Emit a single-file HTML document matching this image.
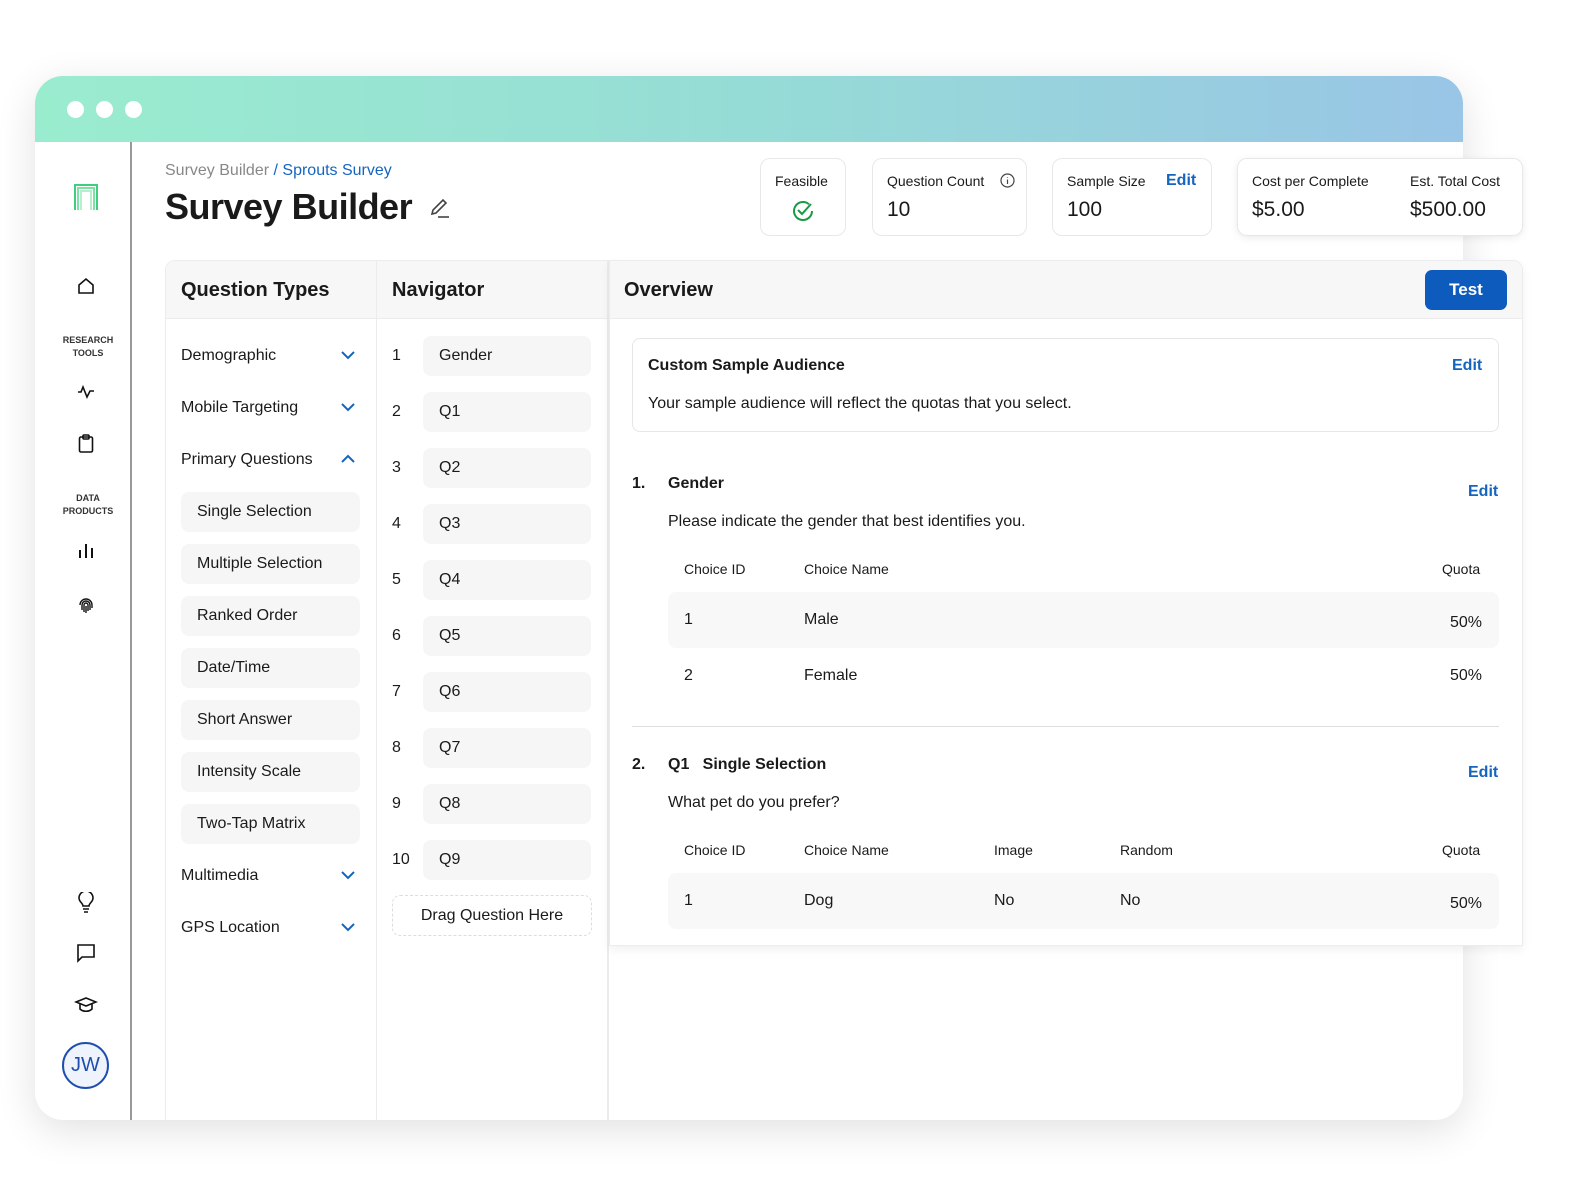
<!DOCTYPE html>
<html><head><meta charset="utf-8"><style>
*{margin:0;padding:0;box-sizing:border-box}
body{width:1571px;height:1197px;background:#fff;font-family:"Liberation Sans",sans-serif;color:#1a1a1a;position:relative;overflow:hidden}
.a{position:absolute;white-space:nowrap}
.win{position:absolute;left:35px;top:76px;width:1428px;height:1044px;border-radius:28px;background:#fff;box-shadow:0 10px 40px rgba(0,0,0,.12);overflow:hidden}
.hdr{position:absolute;left:0;top:0;width:100%;height:66px;background:linear-gradient(90deg,#9aeccf 0%,#96dcd6 50%,#99c5e6 100%)}
.dot{position:absolute;top:25px;width:17px;height:17px;border-radius:50%;background:#fff}
.t16{font-size:16px;line-height:18px}
.blue{color:#1565c0}
.card{position:absolute;top:158px;height:78px;border:1px solid #e8e8e8;border-radius:10px;background:#fff}
.pill{position:absolute;height:40px;background:#f6f6f6;border-radius:8px;font-size:16px;line-height:40px;padding-left:16px}
.lbl{font-size:14px;line-height:16px}
.side{font-size:9px;line-height:13px;text-align:center;color:#333;font-weight:bold;width:60px}
</style></head><body>
<div class="win">
<div class="hdr"></div>
<div class="dot" style="left:32px"></div><div class="dot" style="left:61px"></div><div class="dot" style="left:90px"></div>
<div style="position:absolute;left:95px;top:66px;width:2px;height:978px;background:#999"></div>
</div>
<!-- sidebar icons -->
<svg class="a" style="left:74px;top:184px" width="24" height="26" viewBox="0 0 24 26" fill="none" stroke="#3ecf7e" stroke-width="2"><path d="M1 26V1h22v25"/><path d="M4 26V4h16v22" stroke="#7fe0a8"/><path d="M7 26V7h10v19" stroke="#b5efcd"/></svg>
<svg class="a" style="left:77px;top:277px" width="18" height="18" viewBox="0 0 18 18" fill="none" stroke="#111" stroke-width="1.6"><path d="M2 8L9 2l7 6v8H2z"/></svg>
<div class="a side" style="left:58px;top:334px">RESEARCH<br>TOOLS</div>
<svg class="a" style="left:77px;top:385px" width="18" height="14" viewBox="0 0 18 14" fill="none" stroke="#111" stroke-width="1.6"><path d="M1 7h3l2-5 4 10 3-6h4"/></svg>
<svg class="a" style="left:78px;top:434px" width="16" height="19" viewBox="0 0 16 19" fill="none" stroke="#111" stroke-width="1.6"><rect x="1.5" y="3" width="13" height="15" rx="1.5"/><rect x="5" y="1" width="6" height="4" rx="1"/></svg>
<div class="a side" style="left:58px;top:492px">DATA<br>PRODUCTS</div>
<svg class="a" style="left:78px;top:542px" width="16" height="17" viewBox="0 0 16 17" fill="#111"><rect x="1" y="8" width="2" height="8"/><rect x="7" y="2" width="2" height="14"/><rect x="13" y="6" width="2" height="10"/></svg>
<svg class="a" style="left:77px;top:597px" width="18" height="18" viewBox="0 0 18 18" fill="none" stroke="#111" stroke-width="1.4"><path d="M3 8a6 6 0 0112 0v3M5 13V8a4 4 0 018 0v5M7 15V8a2 2 0 014 0v6M9 9v7"/></svg>
<svg class="a" style="left:78px;top:892px" width="16" height="22" viewBox="0 0 16 22" fill="none" stroke="#111" stroke-width="1.6"><path d="M5 14c0-3-4-4-4-8a7 7 0 0114 0c0 4-4 5-4 8z"/><path d="M5 17h6M6 20h4"/></svg>
<svg class="a" style="left:76px;top:943px" width="20" height="20" viewBox="0 0 20 20" fill="none" stroke="#111" stroke-width="1.6"><path d="M2 2h16v12H6l-4 4z"/></svg>
<svg class="a" style="left:74px;top:996px" width="24" height="18" viewBox="0 0 24 18" fill="none" stroke="#111" stroke-width="1.6"><path d="M2 6l10-4 10 4-10 4z"/><path d="M6 8v5c3 3 9 3 12 0V8"/></svg>
<div class="a" style="left:62px;top:1042px;width:47px;height:47px;border:2px solid #1e4fb0;border-radius:50%;background:#eef3fc;color:#1e4fb0;font-size:20px;line-height:43px;text-align:center">JW</div>

<!-- header -->
<div class="a t16" style="left:165px;top:162px;color:#888">Survey Builder <span class="blue">/ Sprouts Survey</span></div>
<div class="a" style="left:165px;top:186px;font-size:36px;line-height:42px;font-weight:bold;letter-spacing:-0.5px">Survey Builder</div>
<svg class="a" style="left:429px;top:197px" width="22" height="22" viewBox="0 0 22 22" fill="none" stroke="#444" stroke-width="1.6"><path d="M3 17l1-4L14 3l3 3L7 16z"/><path d="M9 20h11"/></svg>

<div class="card" style="left:760px;width:86px"></div>
<div class="a lbl" style="left:775px;top:173px">Feasible</div>
<svg class="a" style="left:791px;top:199px" width="24" height="24" viewBox="0 0 24 24" fill="none" stroke="#1a9a45" stroke-width="2"><path d="M21 12a9 9 0 11-3-6.7"/><path d="M7 11l4 4 9-10"/></svg>
<div class="card" style="left:872px;width:155px"></div>
<div class="a lbl" style="left:887px;top:173px">Question Count</div>
<svg class="a" style="left:1000px;top:173px" width="15" height="15" viewBox="0 0 15 15" fill="none" stroke="#444" stroke-width="1.2"><circle cx="7.5" cy="7.5" r="6.5"/><path d="M7.5 6.5v4.5M7.5 4v.6"/></svg>
<div class="a" style="left:887px;top:198px;font-size:21px;line-height:24px">10</div>
<div class="card" style="left:1052px;width:160px"></div>
<div class="a lbl" style="left:1067px;top:173px">Sample Size</div>
<div class="a blue" style="left:1166px;top:172px;font-size:16px;font-weight:bold">Edit</div>
<div class="a" style="left:1067px;top:198px;font-size:21px;line-height:24px">100</div>
<div class="card" style="left:1237px;width:286px;box-shadow:0 2px 8px rgba(0,0,0,.08)"></div>
<div class="a lbl" style="left:1252px;top:173px">Cost per Complete</div>
<div class="a lbl" style="left:1410px;top:173px">Est. Total Cost</div>
<div class="a" style="left:1252px;top:198px;font-size:21px;line-height:24px">$5.00</div>
<div class="a" style="left:1410px;top:198px;font-size:21px;line-height:24px">$500.00</div>

<!-- panels -->
<div class="a" style="left:165px;top:260px;width:444px;height:860px;border:1px solid #ececec;border-radius:10px 0 0 0;border-bottom:none"></div>
<div class="a" style="left:166px;top:261px;width:442px;height:58px;background:#f7f7f7;border-bottom:1px solid #ececec;border-radius:10px 0 0 0"></div>
<div class="a" style="left:376px;top:261px;width:1px;height:859px;background:#ececec"></div>
<div class="a" style="left:607px;top:261px;width:1px;height:859px;background:#ececec"></div>
<div class="a" style="left:181px;top:278px;font-size:20px;line-height:24px;font-weight:bold">Question Types</div>
<div class="a" style="left:392px;top:278px;font-size:20px;line-height:24px;font-weight:bold">Navigator</div>

<div class="a t16" style="left:181px;top:347px">Demographic</div>
<div class="a t16" style="left:181px;top:399px">Mobile Targeting</div>
<div class="a t16" style="left:181px;top:451px">Primary Questions</div>
<div class="a t16" style="left:181px;top:867px">Multimedia</div>
<div class="a t16" style="left:181px;top:919px">GPS Location</div>
<svg class="a" style="left:340px;top:350px" width="16" height="10" viewBox="0 0 16 10" fill="none" stroke="#1565c0" stroke-width="2"><path d="M2 2l6 6 6-6"/></svg>
<svg class="a" style="left:340px;top:402px" width="16" height="10" viewBox="0 0 16 10" fill="none" stroke="#1565c0" stroke-width="2"><path d="M2 2l6 6 6-6"/></svg>
<svg class="a" style="left:340px;top:454px" width="16" height="10" viewBox="0 0 16 10" fill="none" stroke="#1565c0" stroke-width="2"><path d="M2 8l6-6 6 6"/></svg>
<svg class="a" style="left:340px;top:870px" width="16" height="10" viewBox="0 0 16 10" fill="none" stroke="#1565c0" stroke-width="2"><path d="M2 2l6 6 6-6"/></svg>
<svg class="a" style="left:340px;top:922px" width="16" height="10" viewBox="0 0 16 10" fill="none" stroke="#1565c0" stroke-width="2"><path d="M2 2l6 6 6-6"/></svg>
<div class="pill" style="left:181px;top:492px;width:179px">Single Selection</div>
<div class="pill" style="left:181px;top:544px;width:179px">Multiple Selection</div>
<div class="pill" style="left:181px;top:596px;width:179px">Ranked Order</div>
<div class="pill" style="left:181px;top:648px;width:179px">Date/Time</div>
<div class="pill" style="left:181px;top:700px;width:179px">Short Answer</div>
<div class="pill" style="left:181px;top:752px;width:179px">Intensity Scale</div>
<div class="pill" style="left:181px;top:804px;width:179px">Two-Tap Matrix</div>

<div class="a t16" style="left:392px;top:347px">1</div><div class="pill" style="left:423px;top:336px;width:168px">Gender</div>
<div class="a t16" style="left:392px;top:403px">2</div><div class="pill" style="left:423px;top:392px;width:168px">Q1</div>
<div class="a t16" style="left:392px;top:459px">3</div><div class="pill" style="left:423px;top:448px;width:168px">Q2</div>
<div class="a t16" style="left:392px;top:515px">4</div><div class="pill" style="left:423px;top:504px;width:168px">Q3</div>
<div class="a t16" style="left:392px;top:571px">5</div><div class="pill" style="left:423px;top:560px;width:168px">Q4</div>
<div class="a t16" style="left:392px;top:627px">6</div><div class="pill" style="left:423px;top:616px;width:168px">Q5</div>
<div class="a t16" style="left:392px;top:683px">7</div><div class="pill" style="left:423px;top:672px;width:168px">Q6</div>
<div class="a t16" style="left:392px;top:739px">8</div><div class="pill" style="left:423px;top:728px;width:168px">Q7</div>
<div class="a t16" style="left:392px;top:795px">9</div><div class="pill" style="left:423px;top:784px;width:168px">Q8</div>
<div class="a t16" style="left:392px;top:851px">10</div><div class="pill" style="left:423px;top:840px;width:168px">Q9</div>
<div class="a" style="left:392px;top:895px;width:200px;height:41px;border:1px dashed #ddd;border-radius:8px;font-size:16px;line-height:39px;text-align:center">Drag Question Here</div>

<!-- overview -->
<div class="a" style="left:609px;top:260px;width:914px;height:686px;background:#fff;border:1px solid #ececec;border-radius:0 10px 0 0;box-shadow:0 4px 10px rgba(0,0,0,.06)"></div>
<div class="a" style="left:610px;top:261px;width:912px;height:58px;background:#f7f7f7;border-bottom:1px solid #ececec;border-radius:0 10px 0 0"></div>
<div class="a" style="left:624px;top:278px;font-size:20px;line-height:24px;font-weight:bold">Overview</div>
<div class="a" style="left:1425px;top:270px;width:82px;height:40px;background:#0d5bbd;border-radius:7px;color:#fff;font-size:17px;font-weight:bold;line-height:40px;text-align:center">Test</div>

<div class="a" style="left:632px;top:338px;width:867px;height:94px;border:1px solid #e6e6e6;border-radius:8px"></div>
<div class="a t16" style="left:648px;top:357px;font-weight:bold">Custom Sample Audience</div>
<div class="a t16 blue" style="left:1452px;top:357px;font-weight:bold">Edit</div>
<div class="a t16" style="left:648px;top:395px">Your sample audience will reflect the quotas that you select.</div>

<div class="a t16" style="left:632px;top:475px;font-weight:bold">1.</div>
<div class="a t16" style="left:668px;top:475px;font-weight:bold">Gender</div>
<div class="a t16 blue" style="left:1468px;top:483px;font-weight:bold">Edit</div>
<div class="a t16" style="left:668px;top:513px">Please indicate the gender that best identifies you.</div>
<div class="a lbl" style="left:684px;top:561px">Choice ID</div>
<div class="a lbl" style="left:804px;top:561px">Choice Name</div>
<div class="a lbl" style="left:1442px;top:561px">Quota</div>
<div class="a" style="left:668px;top:592px;width:831px;height:56px;background:#f8f8f8;border-radius:8px"></div>
<div class="a t16" style="left:684px;top:611px">1</div>
<div class="a t16" style="left:804px;top:611px">Male</div>
<div class="a t16" style="left:1450px;top:614px">50%</div>
<div class="a t16" style="left:684px;top:667px">2</div>
<div class="a t16" style="left:804px;top:667px">Female</div>
<div class="a t16" style="left:1450px;top:667px">50%</div>
<div class="a" style="left:632px;top:726px;width:867px;height:1px;background:#ddd"></div>

<div class="a t16" style="left:632px;top:756px;font-weight:bold">2.</div>
<div class="a t16" style="left:668px;top:756px;font-weight:bold">Q1&nbsp;&nbsp; Single Selection</div>
<div class="a t16 blue" style="left:1468px;top:764px;font-weight:bold">Edit</div>
<div class="a t16" style="left:668px;top:794px">What pet do you prefer?</div>
<div class="a lbl" style="left:684px;top:842px">Choice ID</div>
<div class="a lbl" style="left:804px;top:842px">Choice Name</div>
<div class="a lbl" style="left:994px;top:842px">Image</div>
<div class="a lbl" style="left:1120px;top:842px">Random</div>
<div class="a lbl" style="left:1442px;top:842px">Quota</div>
<div class="a" style="left:668px;top:873px;width:831px;height:56px;background:#f8f8f8;border-radius:8px"></div>
<div class="a t16" style="left:684px;top:892px">1</div>
<div class="a t16" style="left:804px;top:892px">Dog</div>
<div class="a t16" style="left:994px;top:892px">No</div>
<div class="a t16" style="left:1120px;top:892px">No</div>
<div class="a t16" style="left:1450px;top:895px">50%</div>
</body></html>
